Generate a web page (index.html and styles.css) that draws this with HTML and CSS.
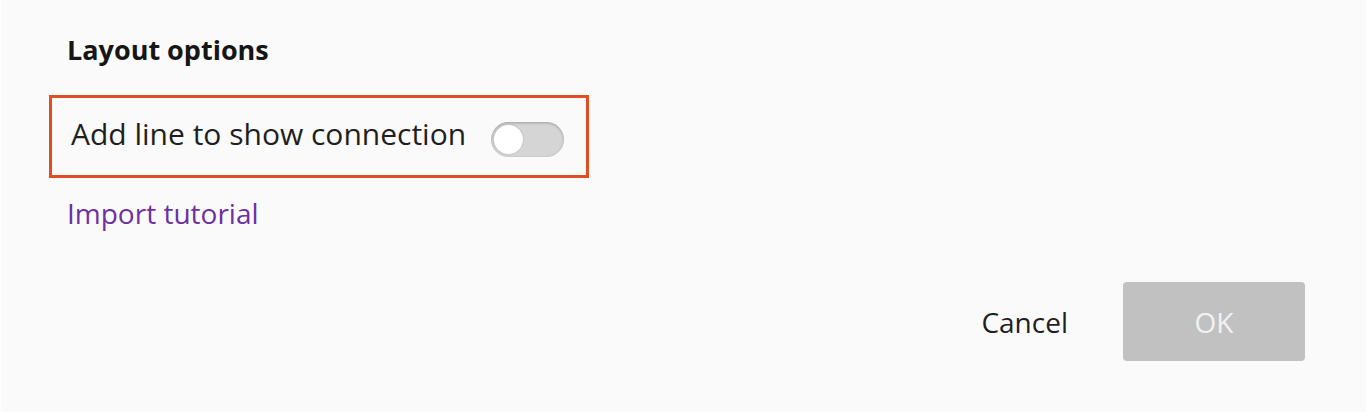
FILE: index.html
```html
<!DOCTYPE html>
<html>
<head>
<meta charset="utf-8">
<link rel="stylesheet" href="styles.css">
</head>
<body>
<div class="dialog">
  <h2 class="title">Layout options</h2>
  <div class="option-box">
    <span class="option-label">Add line to show connection</span>
    <span class="toggle"><span class="knob"></span></span>
  </div>
  <a class="link" href="#">Import tutorial</a>
  <div class="footer">
    <button class="btn-cancel">Cancel</button>
    <button class="btn-ok" disabled>OK</button>
  </div>
</div>
</body>
</html>
```
FILE: styles.css
```css
html, body {
  margin: 0;
  padding: 0;
  background: #ffffff;
}
.dialog {
  box-sizing: border-box;
  width: 1365px;
  height: 412px;
  margin-left: 1px;
  background: #fafafa;
  font-family: "Open Sans", "Noto Sans", sans-serif;
  color: #1f1f1f;
  padding: 30px 61px 0 48px;
  display: flex;
  flex-direction: column;
  align-items: flex-start;
}
.title {
  margin: 0 0 0 18px;
  font-size: 27px;
  font-weight: 700;
  line-height: 40px;
  color: #161616;
}
.option-box {
  box-sizing: border-box;
  margin-top: 25px;
  width: 540px;
  height: 83px;
  border: 3px solid #e04f22;
  display: flex;
  align-items: flex-start;
  padding: 16px 22px 0 19px;
  gap: 25px;
}
.option-label {
  font-size: 30px;
  line-height: 40px;
  color: #1f1f1f;
  white-space: nowrap;
}
.toggle {
  box-sizing: border-box;
  margin-top: 8px;
  width: 73px;
  height: 35px;
  border-radius: 18px;
  background: #d5d5d5;
  box-shadow: inset 0 1px 3px rgba(0,0,0,0.25);
  display: flex;
  align-items: center;
  padding-left: 3px;
}
.knob {
  width: 29px;
  height: 29px;
  border-radius: 50%;
  background: #ffffff;
  box-shadow: 0 0 2px rgba(0,0,0,0.2);
}
.link {
  margin: 15px 0 0 18px;
  font-size: 28px;
  color: #6e30a3;
  text-decoration: none;
  line-height: 40px;
}
.footer {
  align-self: stretch;
  margin-top: 49px;
  display: flex;
  justify-content: flex-end;
  align-items: center;
  gap: 55px;
}
.btn-cancel {
  background: none;
  border: none;
  padding: 0;
  font-family: inherit;
  font-size: 28px;
  color: #1f1f1f;
}
.btn-ok {
  width: 182px;
  height: 79px;
  border: none;
  border-radius: 4px;
  background: #c1c1c1;
  color: #f2f2f2;
  font-family: inherit;
  font-size: 28px;
}
```
